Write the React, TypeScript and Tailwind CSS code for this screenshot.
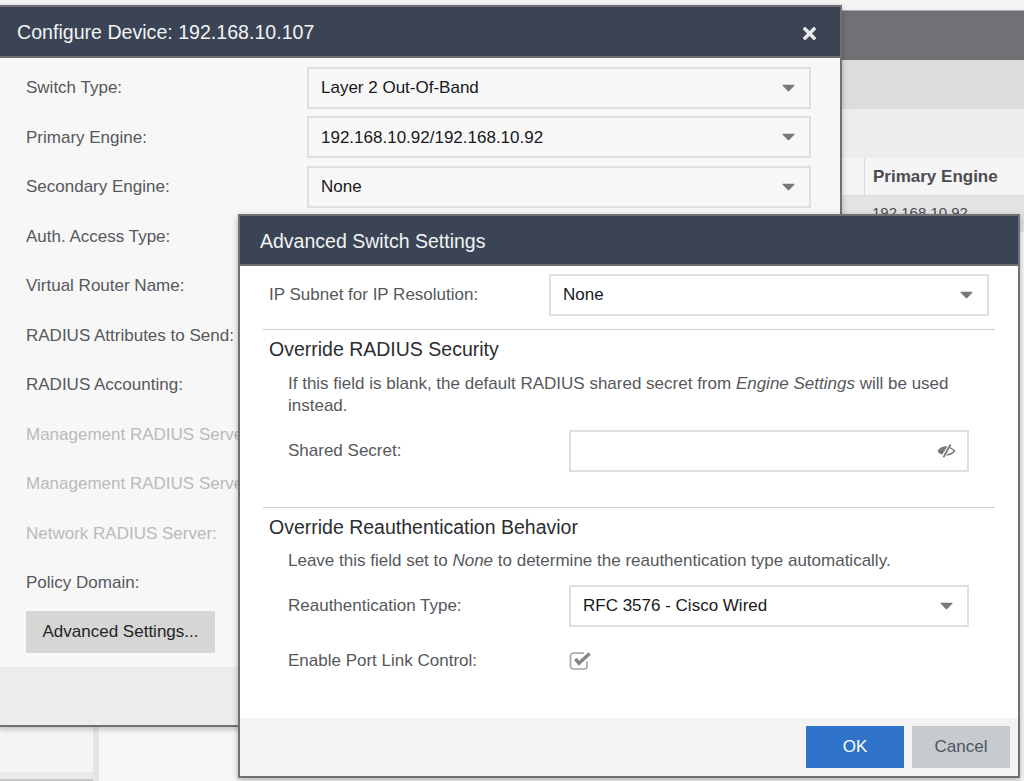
import { FaTimes } from "react-icons/fa";

function Caret() {
    return (
        <svg viewBox="0 0 14 8" className="absolute right-[14px] top-1/2 h-[7px] w-[13px] -translate-y-1/2 text-[#77787c]" fill="currentColor">
            <path d="M.8 0h12.4c.7 0 1 .7.6 1.2L7.6 7.7c-.3.4-.9.4-1.2 0L.2 1.2C-.2.7.1 0 .8 0z" />
        </svg>
    );
}

function Select({ value, className }: { value: string; className: string }) {
    return (
        <div className={`relative flex h-[42px] items-center border-2 border-[#dedfdf] pl-[12px] text-[17px] text-[#17191c] ${className}`}>
            {value}
            <Caret />
        </div>
    );
}

function EyeSlash() {
    return (
        <svg viewBox="0 0 20 16" className="absolute right-[11px] top-1/2 h-[15px] w-[19px] -translate-y-1/2 text-[#77787c]" fill="currentColor">
            <path d="M10.9 3.1C6.3 2.7 2.4 5.1.4 8c1.1 1.7 2.8 3.2 4.9 4.1L10.9 3.1z" />
            <path d="M13.4.6 5.9 14.4l1.7.9L15.1 1.5z" />
            <path d="M13.2 3.6c2.6.8 4.9 2.4 6.4 4.4-1.9 2.8-5.4 5-9.7 5l1.2-2c2.8-.3 5-1.5 6.3-3-1.1-1.3-2.9-2.5-5-3.1z" />
        </svg>
    );
}

function CheckedBox() {
    return (
        <svg viewBox="0 0 23 19" className="h-[19px] w-[23px]" fill="none">
            <path d="M15 2.2H4.2A2.7 2.7 0 0 0 1.5 4.9v10.4A2.7 2.7 0 0 0 4.2 18h11a2.7 2.7 0 0 0 2.7-2.7v-4.8" stroke="#a9a9aa" strokeWidth="1.7" />
            <path d="M6.4 7.8 10 12.2 20.6 2.4" stroke="#858689" strokeWidth="3.4" />
        </svg>
    );
}

const outerRows = [
    { label: "Switch Type:", value: "Layer 2 Out-Of-Band" },
    { label: "Primary Engine:", value: "192.168.10.92/192.168.10.92" },
    { label: "Secondary Engine:", value: "None" },
    { label: "Auth. Access Type:" },
    { label: "Virtual Router Name:" },
    { label: "RADIUS Attributes to Send:" },
    { label: "RADIUS Accounting:" },
    { label: "Management RADIUS Server 1:", muted: true },
    { label: "Management RADIUS Server 2:", muted: true },
    { label: "Network RADIUS Server:", muted: true },
    { label: "Policy Domain:" },
];

export default function App() {
    return (
        <div className="relative h-[781px] w-[1024px] overflow-hidden bg-[#f5f5f5] font-['Liberation_Sans',Arial,sans-serif]">
            {/* page behind the dialogs */}
            <div className="flex h-full flex-col">
                <div className="h-[10px] bg-[#f4f4f4]" />
                <div className="h-[50px] border-t border-[#a9a9ab] bg-[#717074]" />
                <div className="h-[49px] bg-[#dcdcdc]" />
                <div className="h-[49px] bg-[#ededed]" />
                <div className="flex h-[38px] justify-end border-b border-[#dcdcdc] bg-[#f5f5f5]">
                    <div className="flex w-[160px] items-center border-l border-[#dcdcdc] pl-[8px] text-[17px] font-bold text-[#4b4c50]">
                        Primary Engine
                    </div>
                </div>
                <div className="flex h-[36px] justify-end bg-[#e3e3e3]">
                    <div className="w-[160px] pl-[8px] pt-[6px] text-[15px] text-[#4b4c50]">192.168.10.92</div>
                </div>
                <div className="flex flex-1">
                    <div className="flex w-[93px] flex-col justify-end">
                        <div className="h-[9px] border-b-2 border-[#c8c8c8] bg-[#e9e9e9]" />
                    </div>
                    <div className="w-[6px] bg-[#e5e5e5]" />
                    <div className="flex-1 bg-[#f7f7f7]" />
                </div>
            </div>

            {/* Configure Device */}
            <div className="absolute left-[-2px] top-[5px] flex h-[722px] w-[844px] flex-col border-2 border-[#6f7076] bg-[#f7f7f7] shadow-[0_2px_6px_rgba(0,0,0,0.25)]">
                <div className="flex h-[51px] items-center justify-between border-b-2 border-[#6f7076] bg-[#3a4454] pl-[17px] pr-[21px] pt-[3px] text-[19.6px] text-[#f2f3f4]">
                    <span>Configure Device: 192.168.10.107</span>
                    <FaTimes className="size-[19px] text-[#e8e9ea]" />
                </div>
                <div className="flex flex-1 flex-col pl-[26px] pr-[29px] pt-[5px]">
                    {outerRows.map((r) => (
                        <div key={r.label} className="flex h-[49.5px] shrink-0 items-center justify-between">
                            <span className={`whitespace-nowrap text-[17px] ${r.muted ? "text-[#b9babc]" : "text-[#56585c]"}`}>{r.label}</span>
                            {r.value && <Select value={r.value} className="w-[504px]" />}
                        </div>
                    ))}
                    <button className="mt-[3px] h-[42px] w-[189px] bg-[#d6d6d4] text-[17px] text-[#222428]">Advanced Settings...</button>
                </div>
                <div className="h-[58px] bg-[#ececec]" />
            </div>

            {/* Advanced Switch Settings */}
            <div className="absolute left-[238px] top-[214px] flex h-[564px] w-[782px] flex-col border-2 border-[#6f7076] bg-white shadow-[0_2px_6px_rgba(0,0,0,0.3)]">
                <div className="flex h-[50px] shrink-0 items-center border-b-2 border-[#6f7076] bg-[#3a4454] pl-[20px] pt-[3px] text-[19.5px] text-[#f2f3f4]">
                    Advanced Switch Settings
                </div>
                <div className="flex flex-1 flex-col px-[23px] pt-[8px] text-[17px] text-[#56585c]">
                    <div className="flex items-center justify-between pb-[13px] pl-[6px] pr-[6px]">
                        <span>IP Subnet for IP Resolution:</span>
                        <Select value="None" className="w-[440px]" />
                    </div>
                    <div className="border-t border-[#cfcfcf] pl-[6px] pt-[7px]">
                        <h3 className="text-[19.5px] leading-[24px] text-[#2b2d31]">Override RADIUS Security</h3>
                        <div className="pl-[19px] pr-[26px] pt-[12px]">
                            <p className="leading-[22px]">
                                If this field is blank, the default RADIUS shared secret from <i>Engine Settings</i> will be used instead.
                            </p>
                            <div className="mt-[13px] flex items-center justify-between">
                                <span>Shared Secret:</span>
                                <div className="relative h-[42px] w-[400px] border-2 border-[#dedfdf]">
                                    <EyeSlash />
                                </div>
                            </div>
                        </div>
                    </div>
                    <div className="mt-[35px] border-t border-[#cfcfcf] pl-[6px] pt-[7px]">
                        <h3 className="text-[19.5px] leading-[24px] text-[#2b2d31]">Override Reauthentication Behavior</h3>
                        <div className="pl-[19px] pr-[26px] pt-[11px]">
                            <p className="leading-[22px]">
                                Leave this field set to <i>None</i> to determine the reauthentication type automatically.
                            </p>
                            <div className="mt-[13px] flex items-center justify-between">
                                <span>Reauthentication Type:</span>
                                <Select value="RFC 3576 - Cisco Wired" className="w-[400px]" />
                            </div>
                            <div className="mt-[21px] flex items-center">
                                <span className="w-[281px]">Enable Port Link Control:</span>
                                <CheckedBox />
                            </div>
                        </div>
                    </div>
                </div>
                <div className="flex h-[58px] shrink-0 items-center justify-end gap-[8px] bg-[#f3f3f3] pr-[8px]">
                    <button className="h-[42px] w-[98px] bg-[#2f72c9] text-[17px] text-white">OK</button>
                    <button className="h-[42px] w-[98px] bg-[#c8cbce] text-[17px] text-[#4b5560]">Cancel</button>
                </div>
            </div>
        </div>
    );
}
